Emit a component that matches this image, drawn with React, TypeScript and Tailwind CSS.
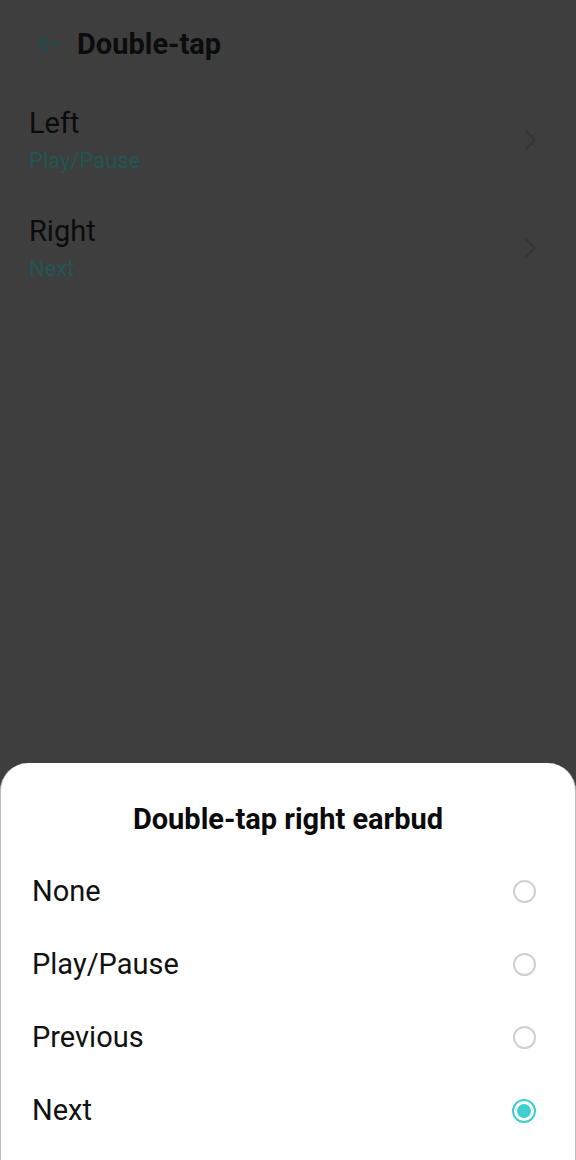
import { useState } from 'react';

const OPTIONS = ['None', 'Play/Pause', 'Previous', 'Next'] as const;

function BackArrow() {
  return (
    <svg width="26" height="20" viewBox="0 0 26 20" fill="none" stroke="#1f4d4d" strokeWidth="2" strokeLinecap="round" strokeLinejoin="round">
      <path d="M24 10H3" />
      <path d="M10 3L3 10l7 7" />
    </svg>
  );
}

function Chevron() {
  return (
    <svg width="16" height="22" viewBox="0 0 16 22" fill="none" stroke="#353535" strokeWidth="2.2" strokeLinecap="round" strokeLinejoin="round">
      <path d="M4 2l9 9-9 9" />
    </svg>
  );
}

function Radio({ checked }: { checked: boolean }) {
  if (checked) {
    return (
      <span className="flex h-[24px] w-[24px] items-center justify-center rounded-full border-[2px] border-[#3fcfcf] bg-white">
        <span className="h-[14px] w-[14px] rounded-full bg-[#3fcfcf]" />
      </span>
    );
  }
  return <span className="h-[23px] w-[23px] rounded-full border-[2px] border-[#d0d0d0]" />;
}

export default function App() {
  const [selected, setSelected] = useState<string>('Next');

  return (
    <div className="flex h-[1160px] w-[576px] flex-col overflow-hidden bg-[#3e3e3e] font-['Roboto',sans-serif]">
      <div className="flex items-center gap-[14px] pl-[37px] pt-[27px]">
        <BackArrow />
        <h1 className="text-[29px] font-bold leading-[34px] text-[#0c0c0c]">Double-tap</h1>
      </div>

      <div className="mt-[44px] flex flex-col gap-[38px]">
        {[
          { label: 'Left', value: 'Play/Pause' },
          { label: 'Right', value: 'Next' },
        ].map((row) => (
          <div key={row.label} className="flex items-center justify-between pl-[29px] pr-[38px]">
            <div className="flex flex-col">
              <span className="text-[29px] leading-[36px] text-[#0c0c0c]">{row.label}</span>
              <span className="mt-[6px] text-[22px] leading-[28px] text-[#225656]">{row.value}</span>
            </div>
            <Chevron />
          </div>
        ))}
      </div>

      <div className="mt-auto h-[397px] rounded-t-[28px] border-x border-[#bdbdbd] bg-white">
        <h2 className="pt-[38px] text-center text-[29px] font-bold leading-[36px] text-[#0a0a0a]">
          Double-tap right earbud
        </h2>
        <ul className="mt-[18px]">
          {OPTIONS.map((opt) => (
            <li
              key={opt}
              onClick={() => setSelected(opt)}
              className="flex h-[73px] cursor-pointer items-center justify-between pl-[31px] pr-[39px]"
            >
              <span className="text-[29px] text-[#111111]">{opt}</span>
              <Radio checked={selected === opt} />
            </li>
          ))}
        </ul>
      </div>
    </div>
  );
}
